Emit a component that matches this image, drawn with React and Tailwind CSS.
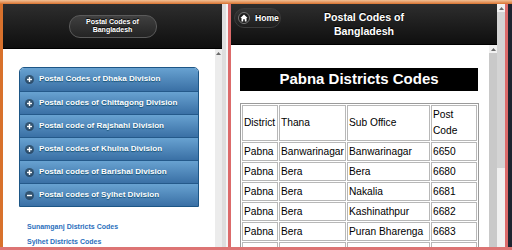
import React from 'react';

const divisions = [
  { label: 'Postal Codes of Dhaka Division', open: false },
  { label: 'Postal codes of Chittagong Division', open: false },
  { label: 'Postal code of Rajshahi Division', open: false },
  { label: 'Postal codes of Khulna Division', open: false },
  { label: 'Postal codes of Barishal Division', open: false },
  { label: 'Postal codes of Sylhet Division', open: true },
];

const rows = [
  ['Pabna', 'Banwarinagar', 'Banwarinagar', '6650'],
  ['Pabna', 'Bera', 'Bera', '6680'],
  ['Pabna', 'Bera', 'Nakalia', '6681'],
  ['Pabna', 'Bera', 'Kashinathpur', '6682'],
  ['Pabna', 'Bera', 'Puran Bharenga', '6683'],
  ['Pabna', 'Bhangura', 'Bhangura', '6640'],
];

function UpArrow() {
  return (
    <svg width="5" height="3" viewBox="0 0 5 3">
      <path d="M0 3 L2.5 0 L5 3 Z" fill="#6b6b6b" />
    </svg>
  );
}

function PlusMinus({ open }) {
  return (
    <span className="w-[9px] h-[9px] rounded-full bg-black/40 flex items-center justify-center shrink-0">
      <svg width="7" height="7" viewBox="0 0 7 7">
        <rect x="1" y="2.8" width="5" height="1.4" fill="#fff" />
        {!open && <rect x="2.8" y="1" width="1.4" height="5" fill="#fff" />}
      </svg>
    </span>
  );
}

function HomeIcon() {
  return (
    <span className="w-[12px] h-[12px] rounded-full bg-[#1c1c1c] border border-[#777] flex items-center justify-center shrink-0">
      <svg width="8" height="8" viewBox="0 0 8 8">
        <path d="M4 0.6 L7.6 4 L6.5 4 L6.5 7.4 L4.8 7.4 L4.8 5.2 L3.2 5.2 L3.2 7.4 L1.5 7.4 L1.5 4 L0.4 4 Z" fill="#fff" />
      </svg>
    </span>
  );
}

function LeftPanel() {
  return (
    <div className="w-[228px] flex border-l-[3px] border-[#d8712c] shrink-0">
      <div className="w-[219px] flex flex-col">
        {/* header */}
        <div className="h-[45px] bg-gradient-to-b from-[#2e2e2e] to-[#0f0f0f] border-b border-black flex items-center justify-center">
          <div className="w-[88px] h-[23px] rounded-[11px] border border-[#5a5a5a] bg-gradient-to-b from-[#404040] to-[#242424] flex items-center justify-center">
            <div className="text-white font-bold text-[7px] leading-[8px] text-center [text-shadow:0_-1px_1px_#000]">
              Postal Codes of
              <br />
              Bangladesh
            </div>
          </div>
        </div>
        {/* content */}
        <div className="flex-1 flex min-h-0">
          <div className="w-[212px] bg-white pt-[18px] pl-[16px]">
            <div className="w-[180px] rounded-t-[5px] border border-[#1d5686] overflow-hidden">
              {divisions.map((d, i) => (
                <div
                  key={d.label}
                  className={
                    'h-[23px] flex items-center pl-[5px] gap-[5px] bg-gradient-to-b from-[#68a2d1] to-[#3a70a5] ' +
                    (i > 0 ? 'border-t border-[#24598a]' : '')
                  }
                >
                  <PlusMinus open={d.open} />
                  <span className="text-white font-bold text-[8.1px] [text-shadow:0_1px_1px_#145072] whitespace-nowrap">
                    {d.label}
                  </span>
                </div>
              ))}
            </div>
            <div className="mt-[13px] pl-[8px] text-[#2a6fbd] font-bold text-[7px]">
              <div className="h-[15px] flex items-center">Sunamganj Districts Codes</div>
              <div className="h-[15px] flex items-center">Sylhet Districts Codes</div>
            </div>
          </div>
          <div className="w-[7px] bg-[#ececec] flex flex-col items-center pt-[3px]">
            <UpArrow />
          </div>
        </div>
      </div>
      <div className="w-[4px] bg-[#dedede]" />
      <div className="w-[2px] bg-[#f4f4f4]" />
    </div>
  );
}

function RightPanel() {
  return (
    <div className="w-[280px] flex border-l-[3px] border-r-[3px] border-[#dc6b6b] shrink-0">
      <div className="w-[266px] flex flex-col">
        {/* header */}
        <div className="relative h-[41px] bg-gradient-to-b from-[#2e2e2e] to-[#0f0f0f] border-b border-black flex items-center justify-center">
          <div className="absolute left-[3px] top-[4px] w-[47px] h-[20px] rounded-full border border-[#3c3c3c] bg-gradient-to-b from-[#363636] to-[#1e1e1e] flex items-center pl-[3px] gap-[5px]">
            <HomeIcon />
            <span className="text-white font-bold text-[8.6px] [text-shadow:0_-1px_1px_#000]">Home</span>
          </div>
          <div className="text-white font-bold text-[10.6px] leading-[14px] text-center [text-shadow:0_-1px_1px_#000]">
            Postal Codes of
            <br />
            Bangladesh
          </div>
        </div>
        {/* content */}
        <div className="flex-1 flex min-h-0">
          <div className="w-[258px] bg-white pt-[23px] pl-[9px] overflow-hidden">
            <div className="w-[238px] h-[23px] bg-black text-white font-bold text-[15px] flex items-center justify-center">
              Pabna Districts Codes
            </div>
            <table className="mt-[12px] w-[239px] table-fixed border-separate border-spacing-[1px] border border-[#9a9a9a] text-black text-[10.2px] leading-[16px]">
              <colgroup>
                <col className="w-[36px]" />
                <col className="w-[67px]" />
                <col className="w-[83px]" />
                <col className="w-[46px]" />
              </colgroup>
              <tbody>
                <tr>
                  <td className="border border-[#b8b8b8] px-[1px] py-0 whitespace-nowrap">District</td>
                  <td className="border border-[#b8b8b8] px-[1px] py-0">Thana</td>
                  <td className="border border-[#b8b8b8] px-[1px] py-0">Sub Office</td>
                  <td className="border border-[#b8b8b8] px-[1px] py-[1px]">
                    Post
                    <br />
                    Code
                  </td>
                </tr>
                {rows.map((r, i) => (
                  <tr key={i}>
                    {r.map((c, j) => (
                      <td key={j} className="border border-[#b8b8b8] px-[1px] py-[1px] leading-[15px] whitespace-nowrap">
                        {c}
                      </td>
                    ))}
                  </tr>
                ))}
              </tbody>
            </table>
          </div>
          <div className="w-[8px] flex flex-col">
            <div className="h-[8px] bg-[#f1f1f1] flex items-center justify-center">
              <UpArrow />
            </div>
            <div className="flex-1 bg-[#c9c9c9]" />
          </div>
        </div>
      </div>
      <div className="w-[8px] flex flex-col">
        <div className="h-[8px] bg-[#f1f1f1] flex items-center justify-center">
          <UpArrow />
        </div>
        <div className="h-[156px] bg-[#d4d4d4]" />
        <div className="flex-1 bg-[#f0f0f0]" />
      </div>
    </div>
  );
}

export default function App() {
  return (
    <div className="w-[512px] h-[250px] overflow-hidden flex flex-col bg-white font-['Liberation_Sans',Arial,sans-serif]">
      <div className="h-[4px] shrink-0 bg-gradient-to-b from-[#f1c196] to-[#d9732b]" />
      <div className="flex-1 flex min-h-0">
        <LeftPanel />
        <RightPanel />
        <div className="w-[4px] bg-[#1e2430]" />
      </div>
      <div className="h-[3px] shrink-0 bg-[#dd7474]" />
    </div>
  );
}
